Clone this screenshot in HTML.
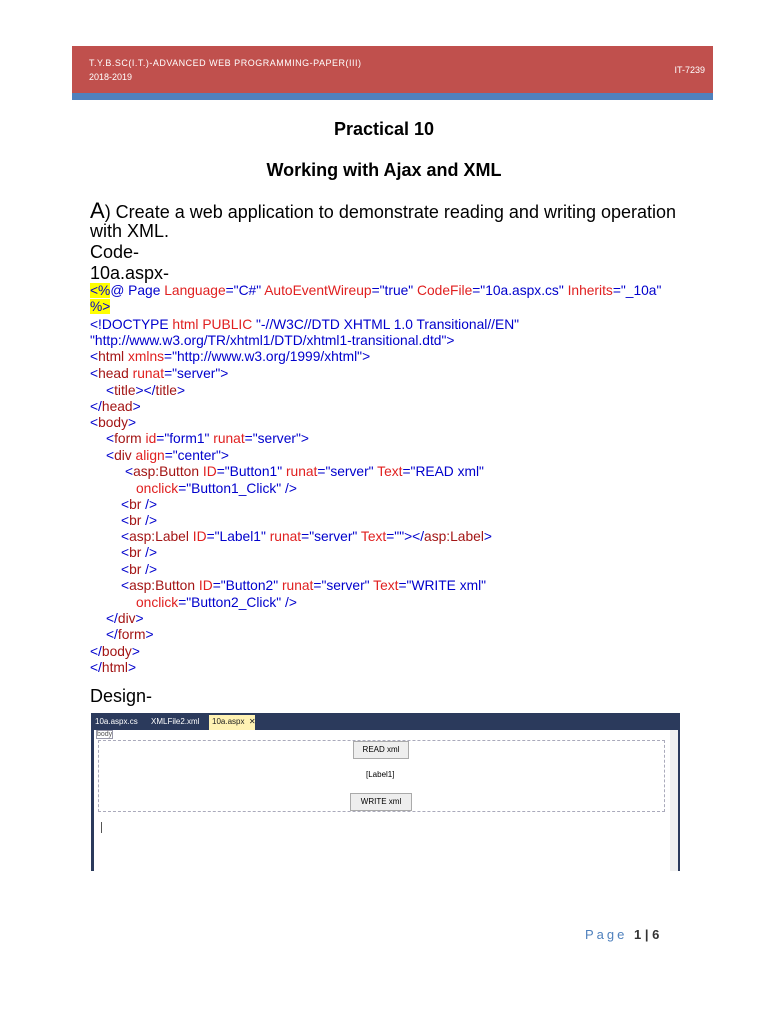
<!DOCTYPE html>
<html><head><style>
body{margin:0;width:768px;height:1024px;background:#fff;position:relative;font-family:"Liberation Sans",Arial,sans-serif;overflow:hidden}
.a{position:absolute;white-space:nowrap}
.hdr{position:absolute;left:72px;top:46px;width:641px;height:47px;background:#c0504d;color:#fff;font-size:9px}
.strip{position:absolute;left:72px;top:93px;width:641px;height:7px;background:#4f81bd}
.c{position:absolute;left:90px;font-size:13.8px;color:#0000cc;white-space:nowrap;line-height:16px}
.t{color:#a31515}.r{color:#e02020}.b{color:#2020c0}
.hl{background:#ffff00}
</style></head><body>
<div class="hdr"><div class="a" style="left:17px;top:12px;letter-spacing:0.5px">T.Y.B.SC(I.T.)-ADVANCED WEB PROGRAMMING-PAPER(III)</div><div class="a" style="left:17px;top:26px">2018-2019</div><div class="a" style="right:8px;top:19px">IT-7239</div></div>
<div class="strip"></div>
<div class="a" style="left:0;width:768px;text-align:center;top:119px;font-size:18px;font-weight:bold">Practical 10</div>
<div class="a" style="left:0;width:768px;text-align:center;top:160px;font-size:18px;font-weight:bold">Working with Ajax and XML</div>
<div class="a" style="left:90px;top:198px;font-size:18px"><span style="font-size:22px">A</span>) Create a web application to demonstrate reading and writing operation</div>
<div class="a" style="left:90px;top:221px;font-size:18px">with XML.</div>
<div class="a" style="left:90px;top:242px;font-size:18px">Code-</div>
<div class="a" style="left:90px;top:263px;font-size:18px">10a.aspx-</div>
<div class="c" style="top:283px"><span class="hl">&lt;%</span>@ Page <span class="r">Language</span>="C#" <span class="r">AutoEventWireup</span>="true" <span class="r">CodeFile</span>="10a.aspx.cs" <span class="r">Inherits</span>="_10a"</div>
<div class="c" style="top:299px"><span class="hl">%&gt;</span></div>
<div class="c" style="top:317px">&lt;!DOCTYPE <span class="r">html PUBLIC</span> "-//W3C//DTD XHTML 1.0 Transitional//EN"</div>
<div class="c" style="top:333px">"http://www.w3.org/TR/xhtml1/DTD/xhtml1-transitional.dtd"&gt;</div>
<div class="c" style="top:349px">&lt;<span class="t">html</span> <span class="r">xmlns</span>="http://www.w3.org/1999/xhtml"&gt;</div>
<div class="c" style="top:366px">&lt;<span class="t">head</span> <span class="r">runat</span>="server"&gt;</div>
<div class="c" style="top:383px;left:106px">&lt;<span class="t">title</span>&gt;&lt;/<span class="t">title</span>&gt;</div>
<div class="c" style="top:399px">&lt;/<span class="t">head</span>&gt;</div>
<div class="c" style="top:415px">&lt;<span class="t">body</span>&gt;</div>
<div class="c" style="top:431px;left:106px">&lt;<span class="t">form</span> <span class="r">id</span>="form1" <span class="r">runat</span>="server"&gt;</div>
<div class="c" style="top:448px;left:106px">&lt;<span class="t">div</span> <span class="r">align</span>="center"&gt;</div>
<div class="c" style="top:464px;left:125px">&lt;<span class="t">asp:Button</span> <span class="r">ID</span>="Button1" <span class="r">runat</span>="server" <span class="r">Text</span>="READ xml"</div>
<div class="c" style="top:481px;left:136px"><span class="r">onclick</span>="Button1_Click" /&gt;</div>
<div class="c" style="top:497px;left:121px">&lt;<span class="t">br</span> /&gt;</div>
<div class="c" style="top:513px;left:121px">&lt;<span class="t">br</span> /&gt;</div>
<div class="c" style="top:529px;left:121px">&lt;<span class="t">asp:Label</span> <span class="r">ID</span>="Label1" <span class="r">runat</span>="server" <span class="r">Text</span>=""&gt;&lt;/<span class="t">asp:Label</span>&gt;</div>
<div class="c" style="top:545px;left:121px">&lt;<span class="t">br</span> /&gt;</div>
<div class="c" style="top:562px;left:121px">&lt;<span class="t">br</span> /&gt;</div>
<div class="c" style="top:578px;left:121px">&lt;<span class="t">asp:Button</span> <span class="r">ID</span>="Button2" <span class="r">runat</span>="server" <span class="r">Text</span>="WRITE xml"</div>
<div class="c" style="top:595px;left:136px"><span class="r">onclick</span>="Button2_Click" /&gt;</div>
<div class="c" style="top:611px;left:106px">&lt;/<span class="t">div</span>&gt;</div>
<div class="c" style="top:627px;left:106px">&lt;/<span class="t">form</span>&gt;</div>
<div class="c" style="top:644px">&lt;/<span class="t">body</span>&gt;</div>
<div class="c" style="top:660px">&lt;/<span class="t">html</span>&gt;</div>
<div class="a" style="left:90px;top:686px;font-size:18px">Design-</div>
<div style="position:absolute;left:91px;top:713px;width:589px;height:158px;background:#2b3a5c">
 <div style="position:absolute;left:3px;top:17px;width:576px;height:141px;background:#fff"></div>
 <div style="position:absolute;left:579px;top:17px;width:8px;height:141px;background:#f0f0f0"></div>
 <div class="a" style="left:4px;top:4px;font-size:8px;color:#fff">10a.aspx.cs</div>
 <div class="a" style="left:60px;top:4px;font-size:8px;color:#fff">XMLFile2.xml</div>
 <div style="position:absolute;left:118px;top:2px;width:46px;height:15px;background:#fff2b3"></div>
 <div class="a" style="left:121px;top:4px;font-size:8px;color:#222">10a.aspx &nbsp;✕</div>
 <div class="a" style="left:5px;top:17px;font-size:7px;color:#555;border:1px solid #99a">body</div>
 <div style="position:absolute;left:7px;top:27px;width:565px;height:70px;border:1px dashed #aab"></div>
 <div style="position:absolute;left:262px;top:28px;width:54px;height:16px;background:#eee;border:1px solid #aaa;font-size:8px;text-align:center;line-height:16px">READ xml</div>
 <div class="a" style="left:275px;top:57px;font-size:8px">[Label1]</div>
 <div style="position:absolute;left:259px;top:80px;width:60px;height:16px;background:#eee;border:1px solid #aaa;font-size:8px;text-align:center;line-height:16px">WRITE xml</div>
 <div style="position:absolute;left:10px;top:109px;width:1px;height:11px;background:#555"></div>
</div>
<div class="a" style="left:585px;top:927px;font-size:13px;color:#4f81bd;letter-spacing:3px">Page <b style="color:#333;letter-spacing:0">1 | 6</b></div>
</body></html>
